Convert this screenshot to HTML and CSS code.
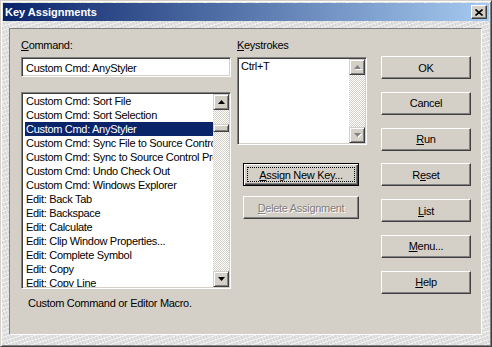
FILE: index.html
```html
<!DOCTYPE html>
<html lang="en">
<head>
  <meta charset="UTF-8">
  <title>Key Assignments</title>
  <link rel="stylesheet" href="styles.css">
</head>
<body>
  <div class="window">
    <!-- Title bar -->
    <div class="titlebar">
      <span class="title">Key Assignments</span>
      <span class="close-btn">
        <svg width="8" height="7" viewBox="0 0 8 7"><path d="M0.5 0.5 L7.5 6.5 M7.5 0.5 L0.5 6.5" stroke="#000" stroke-width="1.6" fill="none"/></svg>
      </span>
    </div>

    <div class="frame">
      <div class="panel">
        <!-- Command column -->
        <div class="col col-command">
          <div class="label"><u>C</u>ommand:</div>
          <div class="field command-field">Custom Cmd: AnyStyler</div>
          <div class="field listbox">
            <ul class="items">
              <li>Custom Cmd: Sort File</li>
              <li>Custom Cmd: Sort Selection</li>
              <li class="selected">Custom Cmd: AnyStyler</li>
              <li>Custom Cmd: Sync File to Source Control</li>
              <li>Custom Cmd: Sync to Source Control Project</li>
              <li>Custom Cmd: Undo Check Out</li>
              <li>Custom Cmd: Windows Explorer</li>
              <li>Edit: Back Tab</li>
              <li>Edit: Backspace</li>
              <li>Edit: Calculate</li>
              <li>Edit: Clip Window Properties...</li>
              <li>Edit: Complete Symbol</li>
              <li>Edit: Copy</li>
              <li>Edit: Copy Line</li>
            </ul>
            <div class="scrollbar">
              <div class="sb-btn"><svg width="7" height="4"><polygon points="0,4 7,4 3.5,0"/></svg></div>
              <div class="sb-track"><div class="sb-thumb"></div></div>
              <div class="sb-btn"><svg width="7" height="4"><polygon points="0,0 7,0 3.5,4"/></svg></div>
            </div>
          </div>
          <p class="desc">Custom Command or Editor Macro.</p>
        </div>

        <!-- Keystrokes column -->
        <div class="col col-keys">
          <div class="label"><u>K</u>eystrokes</div>
          <div class="field keybox">
            <ul class="items">
              <li>Ctrl+T</li>
            </ul>
            <div class="scrollbar disabled">
              <div class="sb-btn"><svg width="7" height="4"><polygon points="0,4 7,4 3.5,0"/></svg></div>
              <div class="sb-track"></div>
              <div class="sb-btn"><svg width="7" height="4"><polygon points="0,0 7,0 3.5,4"/></svg></div>
            </div>
          </div>
          <button class="btn key-btn btn-default"><u>A</u>ssign New Key...</button>
          <button class="btn key-btn btn-disabled"><u>D</u>elete Assignment</button>
        </div>

        <!-- Action buttons -->
        <div class="col col-actions">
          <button class="btn">OK</button>
          <button class="btn">Cancel</button>
          <button class="btn"><u>R</u>un</button>
          <button class="btn">R<u>e</u>set</button>
          <button class="btn"><u>L</u>ist</button>
          <button class="btn"><u>M</u>enu...</button>
          <button class="btn"><u>H</u>elp</button>
        </div>
      </div>
    </div>
  </div>
</body>
</html>
```

FILE: styles.css
```css
/* Base */
body {
  margin: 0;
  background: #d4d0c8;
  font-family: 'Liberation Sans', Arial, sans-serif;
  font-size: 11px;
  letter-spacing: -0.3px;
  color: #000000;
}

/* Window chrome */
.window {
  width: 492px;
  height: 347px;
  box-sizing: border-box;
  border: 1px solid;
  border-color: #d4d0c8 #404040 #404040 #d4d0c8;
  box-shadow: inset 1px 1px #ffffff, inset -1px -1px #808080;
  padding: 2px;
  display: flex;
  flex-direction: column;
  background-color: #e2e2e2;
  background-image:
    repeating-linear-gradient(162deg, rgba(255,255,255,0.55) 0 1px, transparent 1px 4px),
    repeating-linear-gradient(72deg, rgba(0,0,0,0.06) 0 1px, transparent 1px 3px);
}
.titlebar {
  height: 18px;
  display: flex;
  align-items: center;
  justify-content: space-between;
  background: linear-gradient(to right, #0a246a, #a6caf0);
  padding: 0 2px;
}
.title {
  color: #ffffff;
  font-weight: bold;
  font-size: 11px;
  letter-spacing: 0;
  line-height: 18px;
}
.close-btn {
  width: 16px;
  height: 14px;
  box-sizing: border-box;
  display: flex;
  align-items: center;
  justify-content: center;
  background: #d4d0c8;
  border: 1px solid;
  border-color: #ffffff #404040 #404040 #ffffff;
  box-shadow: inset -1px -1px #808080;
}

.frame {
  flex: 1;
  padding: 7px 7px 9px 6px;
}
.panel {
  height: 307px;
  box-sizing: border-box;
  background: #d4d0c8;
  border: 1px solid;
  border-color: #808080 #ffffff #ffffff #808080;
  display: flex;
  padding-left: 11px;
}

/* Columns */
.col {
  display: flex;
  flex-direction: column;
}
.col-command {
  width: 210px;
}
.col-keys {
  width: 130px;
  margin-left: 6px;
}
.col-actions {
  width: 90px;
  margin-left: 14px;
  padding-top: 27px;
  gap: 12.8px;
}
.label {
  margin-top: 10px;
  line-height: 13px;
  height: 13px;
}

/* Sunken fields */
.field {
  box-sizing: border-box;
  background: #ffffff;
  border: 1px solid;
  border-color: #808080 #ffffff #ffffff #808080;
  box-shadow: inset 1px 1px #404040, inset -1px -1px #d4d0c8;
  padding: 1px;
}
.command-field {
  margin-top: 5px;
  height: 20px;
  line-height: 18px;
  padding-left: 4px;
}
.listbox {
  margin-top: 15px;
  height: 197px;
  display: flex;
}
.keybox {
  margin-top: 5px;
  height: 88px;
  display: flex;
}
.items {
  flex: 1;
  list-style: none;
  margin: 0;
  padding: 0 0 0 2px;
  overflow: hidden;
}
.items li {
  height: 14px;
  line-height: 14px;
  padding-left: 1px;
  white-space: nowrap;
  overflow: hidden;
}
.keybox .items {
  padding-left: 1px;
}
.items li.selected {
  background: #0a246a;
  color: #ffffff;
}
.desc {
  margin: 8px 0 0;
  padding-left: 7px;
  line-height: 13px;
}

/* Scrollbars */
.scrollbar {
  width: 16px;
  display: flex;
  flex-direction: column;
}
.sb-btn,
.sb-thumb {
  box-sizing: border-box;
  background: #d4d0c8;
  border: 1px solid;
  border-color: #d4d0c8 #404040 #404040 #d4d0c8;
  box-shadow: inset 1px 1px #ffffff, inset -1px -1px #808080;
}
.sb-btn {
  height: 16px;
  display: flex;
  align-items: center;
  justify-content: center;
}
.sb-btn svg {
  fill: #000000;
}
.sb-track {
  flex: 1;
  background: repeating-conic-gradient(#d4d0c8 0 25%, #ffffff 0 50%) 0 0 / 2px 2px;
}
.sb-thumb {
  margin-top: 14px;
  height: 8px;
}
.scrollbar.disabled svg {
  fill: #808080;
  filter: drop-shadow(1px 1px 0 #ffffff);
}

/* Buttons */
.btn {
  display: block;
  width: 100%;
  height: 23px;
  padding: 0;
  box-sizing: border-box;
  background: #d4d0c8;
  font-family: 'Liberation Sans', Arial, sans-serif;
  font-size: 11px;
  letter-spacing: -0.3px;
  color: #000000;
  text-align: center;
  border: 1px solid;
  border-color: #ffffff #404040 #404040 #ffffff;
  box-shadow: inset -1px -1px #808080;
}
.key-btn {
  width: 116px;
  margin-left: 6px;
}
.btn-default {
  margin-top: 18px;
  border-color: #000000;
  box-shadow: inset 1px 1px #ffffff, inset -1px -1px #404040, inset -2px -2px #808080;
  outline: 1px dotted #000000;
  outline-offset: -5px;
}
.btn-disabled {
  margin-top: 10px;
  color: #808080;
  text-shadow: 1px 1px 0 #ffffff;
}
```
